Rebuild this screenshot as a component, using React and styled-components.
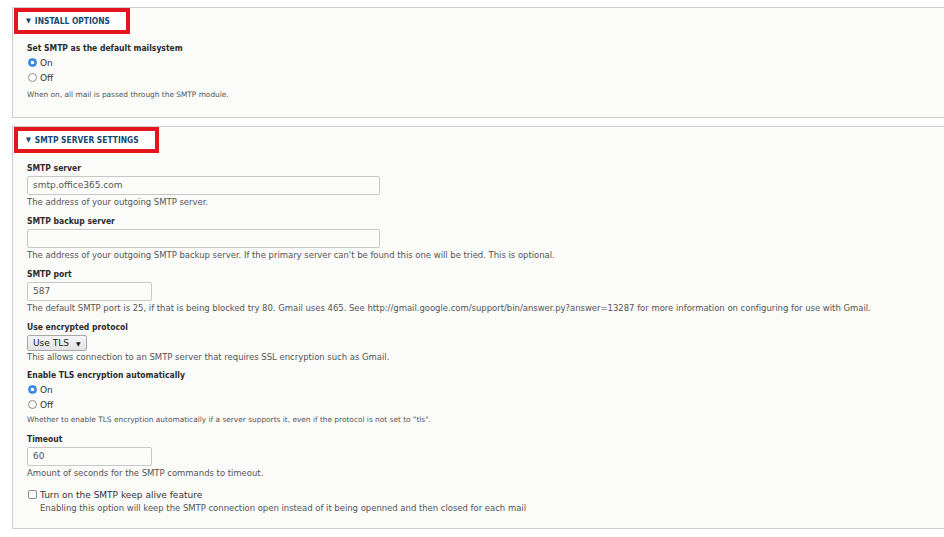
import React from 'react'
import styled, { createGlobalStyle } from 'styled-components'

const GlobalStyle = createGlobalStyle`
  html, body {
    margin: 0;
    padding: 0;
    background: #fff;
  }
  body {
    font-family: "DejaVu Sans", "Liberation Sans", sans-serif;
    color: #333;
  }
`

const Page = styled.div`
  width: 944px;
  height: 537px;
  overflow: hidden;
  padding: 7px 0 0 12px;
  box-sizing: border-box;
  display: flex;
  flex-direction: column;
  gap: 8px;
`

const Panel = styled.fieldset`
  margin: 0;
  width: 960px;
  box-sizing: border-box;
  border: 1px solid #cdcdcd;
  border-right: none;
  background: #fbfbf9;
  padding: 0 0 ${(p) => p.$bottom}px 14px;
  min-width: 0;
`

const Legend = styled.div`
  display: flex;
  width: max-content;
  align-items: center;
  gap: 4px;
  box-sizing: border-box;
  height: 26px;
  margin: 0 0 0 -13px;
  padding: 0 16px 0 8px;
  border: 4px solid #e4151f;
  background: #fff;
  color: #164a72;
  font-family: "DejaVu Sans Condensed", "DejaVu Sans", sans-serif;
  font-size: 8.4px;
  font-weight: bold;
  text-transform: uppercase;
`

const Caret = styled.span`
  font-size: 7px;
`

const Field = styled.div`
  margin-top: ${(p) => p.$gap}px;
`

const Label = styled.div`
  font-family: "DejaVu Sans Condensed", "DejaVu Sans", sans-serif;
  font-size: 8.5px;
  font-weight: bold;
  line-height: 13px;
  color: #2b2b2b;
`

const Input = styled.div`
  box-sizing: border-box;
  width: ${(p) => p.$width}px;
  height: 19px;
  margin-top: 1px;
  border: 1px solid #c8c8c8;
  border-radius: 2px;
  background: #fcfcfa;
  padding-left: 5px;
  font-size: 9px;
  line-height: 17px;
  color: #555;
`

const Select = styled.div`
  box-sizing: border-box;
  display: flex;
  width: max-content;
  align-items: center;
  gap: 7px;
  height: 16px;
  margin-top: 1px;
  padding: 0 5px;
  border: 1px solid #a8a8a8;
  border-radius: 2px;
  background: linear-gradient(#f6f6f6, #e2e2e2);
  font-size: 9px;
  color: #222;
`

const SelectArrow = styled.span`
  font-size: 6px;
`

const Desc = styled.div`
  font-size: ${(p) => (p.$small ? 7.4 : 8.5)}px;
  line-height: 12px;
  margin-top: ${(p) => p.$top ?? 1}px;
  margin-left: ${(p) => p.$indent || 0}px;
  color: #555;
  letter-spacing: ${(p) => (p.$small ? 0 : -0.03)}px;
`

const OptionRow = styled.label`
  display: flex;
  align-items: center;
  gap: 3px;
  height: 15px;
  padding-left: 1px;
  font-size: 9px;
  color: #333;
`

const Radio = styled.span`
  box-sizing: border-box;
  width: 9px;
  height: 9px;
  border-radius: 50%;
  border: 1px solid ${(p) => (p.$on ? '#2a78d6' : '#8c8c8c')};
  background: ${(p) =>
    p.$on
      ? 'radial-gradient(circle, #fff 0 1.4px, #3f92ee 1.9px)'
      : '#fff'};
`

const Check = styled.span`
  box-sizing: border-box;
  width: 9px;
  height: 9px;
  border-radius: 2px;
  border: 1px solid #8c8c8c;
  background: #fff;
`

const RadioOption = ({ on, children }) => (
  <OptionRow>
    <Radio $on={on} />
    {children}
  </OptionRow>
)

const App = () => {
  return (
    <>
      <GlobalStyle />
      <Page>
        {/* Install options */}
        <Panel $bottom={16}>
          <Legend>
            <Caret>▼</Caret>Install options
          </Legend>
          <Field $gap={8}>
            <Label>Set SMTP as the default mailsystem</Label>
            <RadioOption on>On</RadioOption>
            <RadioOption>Off</RadioOption>
            <Desc $small $top={4}>
              When on, all mail is passed through the SMTP module.
            </Desc>
          </Field>
        </Panel>

        {/* SMTP server settings */}
        <Panel $bottom={14}>
          <Legend>
            <Caret>▼</Caret>SMTP server settings
          </Legend>
          <Field $gap={9}>
            <Label>SMTP server</Label>
            <Input $width={353}>smtp.office365.com</Input>
            <Desc>The address of your outgoing SMTP server.</Desc>
          </Field>
          <Field $gap={7}>
            <Label>SMTP backup server</Label>
            <Input $width={353} />
            <Desc>
              The address of your outgoing SMTP backup server. If the primary
              server can't be found this one will be tried. This is optional.
            </Desc>
          </Field>
          <Field $gap={7}>
            <Label>SMTP port</Label>
            <Input $width={125}>587</Input>
            <Desc>
              The default SMTP port is 25, if that is being blocked try 80.
              Gmail uses 465. See
              http://gmail.google.com/support/bin/answer.py?answer=13287 for
              more information on configuring for use with Gmail.
            </Desc>
          </Field>
          <Field $gap={7}>
            <Label>Use encrypted protocol</Label>
            <Select>
              Use TLS<SelectArrow>▼</SelectArrow>
            </Select>
            <Desc $top={0}>
              This allows connection to an SMTP server that requires SSL
              encryption such as Gmail.
            </Desc>
          </Field>
          <Field $gap={6}>
            <Label>Enable TLS encryption automatically</Label>
            <RadioOption on>On</RadioOption>
            <RadioOption>Off</RadioOption>
            <Desc $small $top={2}>
              Whether to enable TLS encryption automatically if a server
              supports it, even if the protocol is not set to "tls".
            </Desc>
          </Field>
          <Field $gap={7}>
            <Label>Timeout</Label>
            <Input $width={125}>60</Input>
            <Desc>Amount of seconds for the SMTP commands to timeout.</Desc>
          </Field>
          <Field $gap={8}>
            <OptionRow>
              <Check />
              Turn on the SMTP keep alive feature
            </OptionRow>
            <Desc $indent={13} $top={0}>
              Enabling this option will keep the SMTP connection open instead
              of it being openned and then closed for each mail
            </Desc>
          </Field>
        </Panel>
      </Page>
    </>
  )
}

export default App
